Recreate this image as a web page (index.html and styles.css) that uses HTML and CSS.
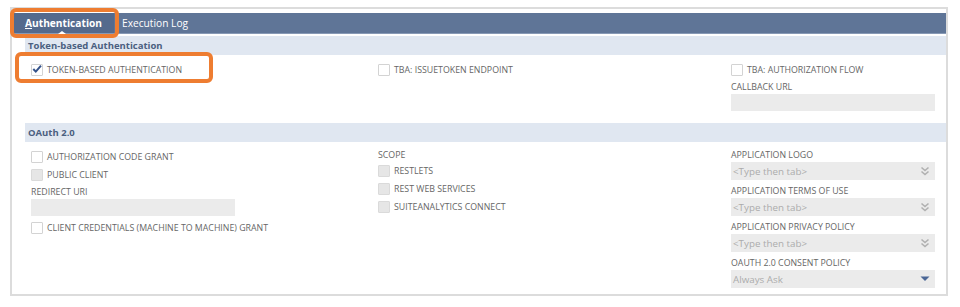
FILE: index.html
```html
<!DOCTYPE html>
<html>
<head>
<meta charset="utf-8">
<link rel="stylesheet" href="styles.css">
</head>
<body>
<div class="panel">
  <div class="tabbar">
    <div class="tab active"><span class="u">A</span>uthentication<span class="caret"></span></div>
    <div class="tab">Execution Log</div>
  </div>
  <div class="gap"></div>
  <div class="section-head">Token-based Authentication</div>
  <div class="grid tba">
    <div class="col">
      <div class="check-row"><span class="cb checked"><svg viewBox="0 0 12 12" width="12" height="12"><path d="M2.3 6 L4.8 8.6 L10 2.6" fill="none" stroke="#34528a" stroke-width="2"/></svg></span><span class="lbl">TOKEN-BASED AUTHENTICATION</span></div>
    </div>
    <div class="col">
      <div class="check-row"><span class="cb"></span><span class="lbl">TBA: ISSUETOKEN ENDPOINT</span></div>
    </div>
    <div class="col">
      <div class="check-row"><span class="cb"></span><span class="lbl">TBA: AUTHORIZATION FLOW</span></div>
      <div class="field-label">CALLBACK URL</div>
      <div class="input"></div>
    </div>
  </div>
  <div class="section-head">OAuth 2.0</div>
  <div class="grid oauth">
    <div class="col">
      <div class="check-row"><span class="cb"></span><span class="lbl">AUTHORIZATION CODE GRANT</span></div>
      <div class="check-row"><span class="cb disabled"></span><span class="lbl">PUBLIC CLIENT</span></div>
      <div class="field-label">REDIRECT URI</div>
      <div class="input spaced"></div>
      <div class="check-row"><span class="cb"></span><span class="lbl">CLIENT CREDENTIALS (MACHINE TO MACHINE) GRANT</span></div>
    </div>
    <div class="col">
      <div class="field-label first">SCOPE</div>
      <div class="check-row"><span class="cb disabled"></span><span class="lbl">RESTLETS</span></div>
      <div class="check-row"><span class="cb disabled"></span><span class="lbl">REST WEB SERVICES</span></div>
      <div class="check-row"><span class="cb disabled"></span><span class="lbl">SUITEANALYTICS CONNECT</span></div>
    </div>
    <div class="col">
      <div class="field-label first">APPLICATION LOGO</div>
      <div class="select"><span>&lt;Type then tab&gt;</span><svg viewBox="0 0 10 10" width="10" height="10"><path d="M1.5 1.5 L5 4.5 L8.5 1.5 M1.5 5.5 L5 8.5 L8.5 5.5" fill="none" stroke="#b0b0b0" stroke-width="1.6"/></svg></div>
      <div class="field-label">APPLICATION TERMS OF USE</div>
      <div class="select"><span>&lt;Type then tab&gt;</span><svg viewBox="0 0 10 10" width="10" height="10"><path d="M1.5 1.5 L5 4.5 L8.5 1.5 M1.5 5.5 L5 8.5 L8.5 5.5" fill="none" stroke="#b0b0b0" stroke-width="1.6"/></svg></div>
      <div class="field-label">APPLICATION PRIVACY POLICY</div>
      <div class="select"><span>&lt;Type then tab&gt;</span><svg viewBox="0 0 10 10" width="10" height="10"><path d="M1.5 1.5 L5 4.5 L8.5 1.5 M1.5 5.5 L5 8.5 L8.5 5.5" fill="none" stroke="#b0b0b0" stroke-width="1.6"/></svg></div>
      <div class="field-label">OAUTH 2.0 CONSENT POLICY</div>
      <div class="select"><span>Always Ask</span><svg viewBox="0 0 10 10" width="10" height="10"><path d="M0.5 2.5 L9.5 2.5 L5 7 Z" fill="#4b6796"/></svg></div>
    </div>
  </div>
</div>
<div class="hl hl-tab"></div>
<div class="hl hl-check"></div>
</body>
</html>
```
FILE: styles.css
```css
html, body {
  margin: 0;
  padding: 0;
  background: #fff;
  font-family: "Open Sans", "Liberation Sans", sans-serif;
}
body {
  position: relative;
  width: 960px;
  height: 307px;
  overflow: hidden;
}
.panel {
  position: relative;
  margin: 7px 0 0 10px;
  width: 934px;
  height: 285px;
  border: 2px solid #dcdcdc;
  display: flex;
  flex-direction: column;
}
.panel > * { flex: none; }
.tabbar {
  margin-top: 4px;
  height: 20px;
  background: #5f7597;
  border-bottom: 1px solid #8799b5;
  display: flex;
  align-items: stretch;
}
.tab {
  position: relative;
  color: #fff;
  font-size: 10.2px;
  line-height: 20px;
  padding: 0 8px 0 8px;
}
.tab.active {
  background: #546a8d;
  font-weight: 700;
  padding: 0 12px 0 13px;
}
.tab .u { text-decoration: underline; }
.caret {
  position: absolute;
  left: 46px;
  bottom: -1px;
  width: 0;
  height: 0;
  border-left: 4px solid transparent;
  border-right: 4px solid transparent;
  border-bottom: 3px solid #fff;
}
.gap { height: 2px; }
.section-head {
  margin-left: 13px;
  height: 19px;
  line-height: 19px;
  background: #e0e7f1;
  color: #4b5f80;
  font-size: 9.5px;
  font-weight: 700;
  padding-left: 3px;
}
.grid {
  display: grid;
  grid-template-columns: 347px 353px 205px;
  padding-left: 19px;
}
.tba { padding-top: 6px; height: 68px; box-sizing: border-box; }
.oauth { padding-top: 6px; }
.col {
  display: flex;
  flex-direction: column;
}
.check-row {
  display: flex;
  align-items: center;
  height: 18px;
}
.cb {
  width: 12px;
  height: 12px;
  border: 1px solid #d3d3d3;
  background: #fff;
  border-radius: 1px;
  box-sizing: border-box;
  margin-right: 4px;
  flex: none;
  position: relative;
}
.cb svg { position: absolute; left: -1px; top: -2px; }
.cb.disabled {
  background: #e6e6e6;
  border-color: #dadada;
}
.lbl {
  font-size: 8.8px;
  color: #666;
  line-height: 12px;
}
.field-label {
  font-size: 8.8px;
  color: #666;
  line-height: 12px;
  margin-top: 2px;
  height: 13px;
}
.field-label.first { margin-top: 1px; }
.input {
  width: 204px;
  height: 17px;
  background: #ebebeb;
}
.input.spaced { margin-bottom: 3px; }
.select {
  width: 204px;
  height: 18px;
  background: #ebebeb;
  display: flex;
  align-items: center;
  justify-content: space-between;
  padding: 0 5px 0 2px;
  box-sizing: border-box;
  font-size: 9.8px;
  color: #ababab;
  margin-bottom: 3px;
}
.hl {
  position: absolute;
  border: 4px solid #ee7d31;
  border-radius: 6px;
  box-sizing: border-box;
}
.hl-tab {
  left: 10px;
  top: 8px;
  width: 109px;
  height: 30px;
}
.hl-check {
  left: 15px;
  top: 52px;
  width: 198px;
  height: 31px;
}
```
